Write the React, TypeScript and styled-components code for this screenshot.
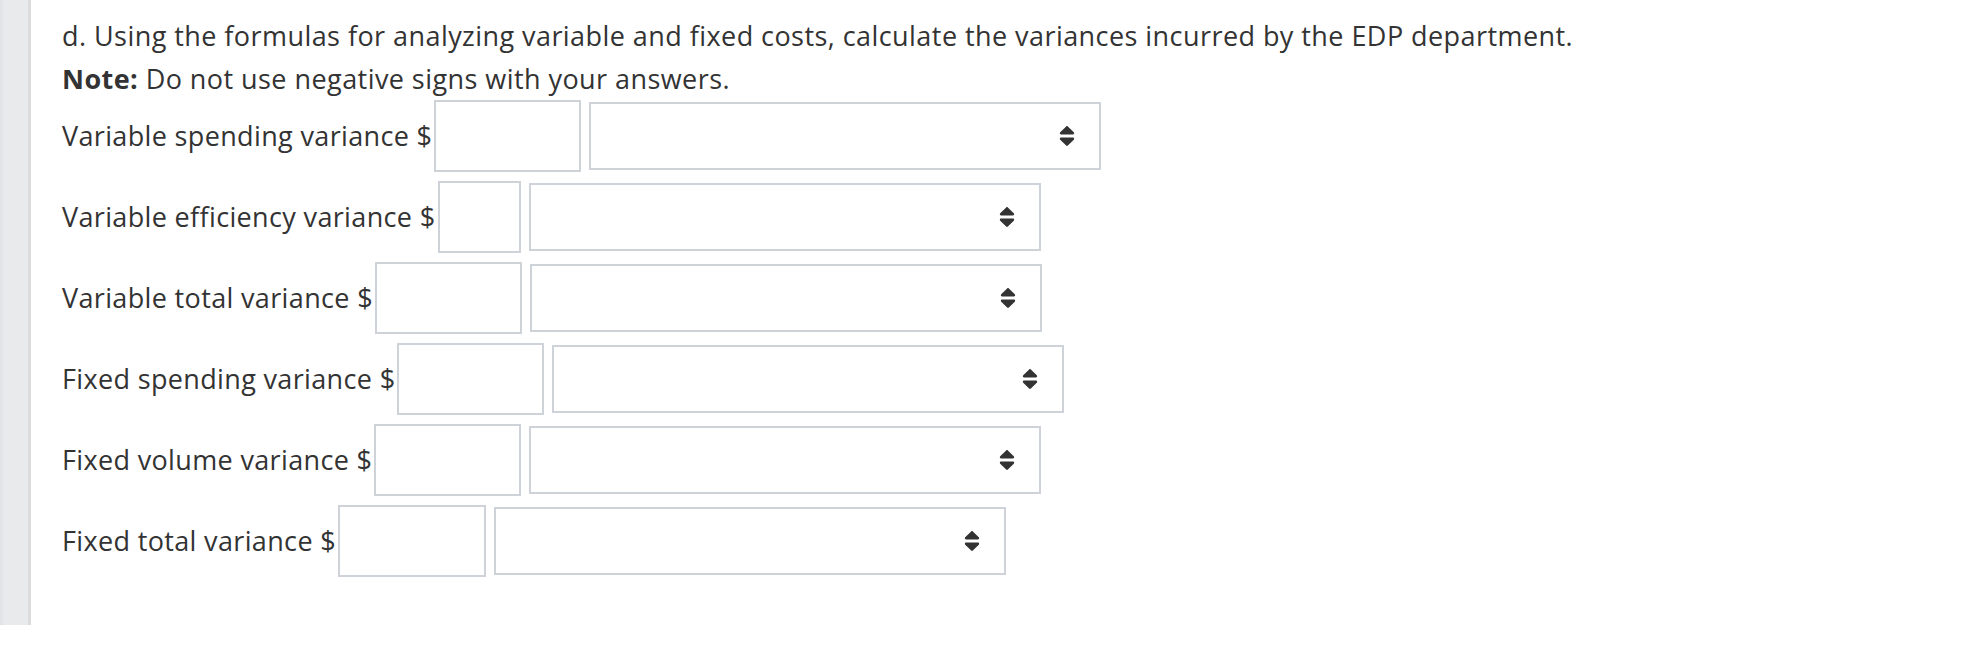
import styled, {createGlobalStyle} from "styled-components";

const GlobalStyle = createGlobalStyle`
    body{
        margin: 0;
        background: #fff;
        font-family: "Open Sans", "Liberation Sans", sans-serif;
        color: #333;
    }
`

const Page = styled.div`
    display: flex;
    height: 625px;
`

const SideBar = styled.div`
    width: 31px;
    flex-shrink: 0;
    background: linear-gradient(to right, #e0e3e6 0, #e9eaec 5px, #e9eaec 28px, #dcdcdd 28px);
`

const Content = styled.div`
    flex: 1;
    padding: 15px 0 0 31px;
    font-size: 27px;
    letter-spacing: 0.35px;
    line-height: 42.5px;
`

const Text = styled.p`
    margin: 0;
    white-space: nowrap;
    letter-spacing: 0.44px;
    b{
        font-weight: 700;
    }
`

const Rows = styled.div`
    display: flex;
    flex-direction: column;
    gap: 9px;
`

const Row = styled.div`
    display: flex;
    align-items: center;
    height: 72px;
`

const Label = styled.span`
    white-space: nowrap;
    padding-top: 1px;
`

const AmountInput = styled.input<{ $w: number }>`
    width: ${p => p.$w}px;
    height: 72px;
    box-sizing: border-box;
    margin: 0 0 0 2px;
    padding: 0 8px;
    border: 2px solid #ced3d9;
    border-radius: 0;
    background: #fff;
    font: inherit;
    color: inherit;
    outline: none;
`

const SelectWrap = styled.div`
    position: relative;
    width: 512px;
    height: 68px;
    margin-left: 8px;
    svg{
        position: absolute;
        right: 26px;
        top: 50%;
        transform: translateY(-50%);
        pointer-events: none;
    }
`

const Select = styled.select`
    appearance: none;
    -webkit-appearance: none;
    width: 100%;
    height: 100%;
    box-sizing: border-box;
    margin: 0;
    padding: 0 50px 0 12px;
    border: 2px solid #ced3d9;
    border-radius: 0;
    background: #fff;
    font: inherit;
    color: inherit;
    outline: none;
`

const SortIcon = () => (
    <svg width="16" height="20" viewBox="0 57 320 398" fill="#333">
        <path d="M41 288h238c21.4 0 32.1 25.9 17 41L177 448c-9.4 9.4-24.6 9.4-33.9 0L24 329c-15.1-15.1-4.4-41 17-41zm255-105L177 64c-9.4-9.4-24.6-9.4-33.9 0L24 183c-15.1 15.1-4.4 41 17 41h238c21.4 0 32.1-25.9 17-41z"/>
    </svg>
)

const rows = [
    {label: "Variable spending variance $", inputWidth: 147},
    {label: "Variable efficiency variance $", inputWidth: 83},
    {label: "Variable total variance $", inputWidth: 147},
    {label: "Fixed spending variance $", inputWidth: 147},
    {label: "Fixed volume variance $", inputWidth: 147},
    {label: "Fixed total variance $", inputWidth: 148},
]

export default function App(){
    return <>
        <GlobalStyle/>
        <Page>
            <SideBar/>
            <Content>
                <Text>d. Using the formulas for analyzing variable and fixed costs, calculate the variances incurred by the EDP department.</Text>
                <Text><b>Note:</b> Do not use negative signs with your answers.</Text>
                <Rows>
                    {
                        rows.map((item, index) => (<Row key={index}>
                            <Label>{item.label}</Label>
                            <AmountInput type="text" $w={item.inputWidth}/>
                            <SelectWrap>
                                <Select defaultValue="">
                                    <option value=""></option>
                                    <option value="F">Favorable</option>
                                    <option value="U">Unfavorable</option>
                                </Select>
                                <SortIcon/>
                            </SelectWrap>
                        </Row>))
                    }
                </Rows>
            </Content>
        </Page>
    </>
}
